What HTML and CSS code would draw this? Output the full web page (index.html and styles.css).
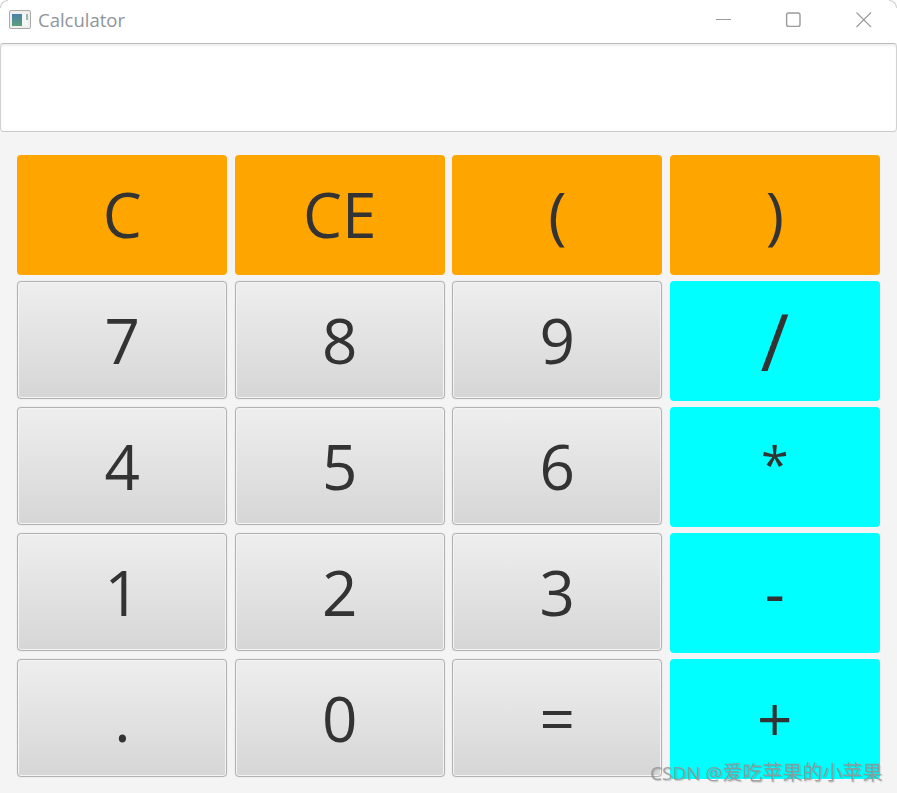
FILE: index.html
```html
<!DOCTYPE html>
<html lang="en">
<head>
<meta charset="utf-8">
<title>Calculator</title>
<link rel="stylesheet" href="styles.css">
</head>
<body>
<div class="window">
  <header class="titlebar">
    <svg class="app-icon" width="24" height="20" viewBox="0 0 24 20">
      <defs><linearGradient id="g" x1="0" y1="0" x2="0" y2="1"><stop offset="0" stop-color="#4a80a8"/><stop offset="1" stop-color="#5aa078"/></linearGradient></defs>
      <rect x="0.5" y="0.5" width="21" height="18" rx="1.5" fill="#efefef" stroke="#ababab"/>
      <rect x="3" y="4" width="10" height="12" fill="url(#g)"/>
      <rect x="13" y="4" width="6" height="12" fill="#f6f6f6"/>
      <rect x="17" y="4" width="2" height="6" fill="#9cbcaa"/>
    </svg>
    <span class="title">Calculator</span>
    <div class="controls">
      <svg class="ctl" width="46" height="16" viewBox="0 0 46 16"><path d="M17 7.5h15" stroke="#9a9a9a" fill="none"/></svg>
      <svg class="ctl" width="46" height="16" viewBox="0 0 46 16"><rect x="16.6" y="1" width="13.4" height="13.4" rx="2" stroke="#9a9a9a" stroke-width="1.4" fill="none"/></svg>
      <svg class="ctl" width="46" height="16" viewBox="0 0 46 16"><path d="M15.5 .5l14.5 14.5M30 .5l-14.5 14.5" stroke="#9a9a9a" stroke-width="1.1" fill="none"/></svg>
    </div>
  </header>
  <div class="display"></div>
  <main class="keys">
    <button class="key orange">C</button>
    <button class="key orange">CE</button>
    <button class="key orange">(</button>
    <button class="key orange">)</button>
    <button class="key">7</button>
    <button class="key">8</button>
    <button class="key">9</button>
    <button class="key cyan slash">/</button>
    <button class="key">4</button>
    <button class="key">5</button>
    <button class="key">6</button>
    <button class="key cyan star">*</button>
    <button class="key">1</button>
    <button class="key">2</button>
    <button class="key">3</button>
    <button class="key cyan">-</button>
    <button class="key">.</button>
    <button class="key">0</button>
    <button class="key">=</button>
    <button class="key cyan">+</button>
  </main>
  <div class="watermark">CSDN @<span class="wm-cjk">爱吃苹果的小苹果</span></div>
</div>
</body>
</html>
```

FILE: styles.css
```css
html, body {
  margin: 0;
  padding: 0;
  background: #fff;
}
.window {
  position: relative;
  width: 897px;
  height: 793px;
  overflow: hidden;
  background: #f4f4f4;
  font-family: "Open Sans", "Noto Sans", "Noto Sans CJK SC", sans-serif;
}
.titlebar {
  position: relative;
  height: 43px;
  background: #fff;
  display: flex;
  align-items: center;
  padding: 0 0 4px 9px;
  box-sizing: border-box;
}
.titlebar::before,
.titlebar::after {
  content: "";
  position: absolute;
  top: 0;
  width: 8px;
  height: 8px;
  box-sizing: border-box;
  border-top: 1px solid #cfcfcf;
}
.titlebar::before {
  left: 0;
  border-left: 1px solid #cfcfcf;
  border-top-left-radius: 8px;
}
.titlebar::after {
  right: 0;
  border-right: 1px solid #cfcfcf;
  border-top-right-radius: 8px;
}
.app-icon {
  margin-right: 5px;
  margin-top: 1px;
}
.title {
  font-size: 18.5px;
  color: #8f949a;
}
.controls {
  margin-left: auto;
  display: flex;
  gap: 25px;
  padding-right: 10px;
}
.display {
  height: 89px;
  box-sizing: border-box;
  background: #fff;
  border: 1px solid #d2d2d2;
  border-top: 1px solid #bcbcbc;
  border-bottom: 1px solid #c8c8c8;
  border-radius: 4px;
  box-shadow: inset 0 2px 2px #f0f0f0;
}
.keys {
  display: grid;
  grid-template-columns: repeat(4, 210px);
  grid-auto-rows: 120px;
  gap: 6px 7.5px;
  padding: 23.3px 0 0 17.3px;
}
.key {
  margin: 0;
  padding: 0;
  height: 118px;
  box-sizing: border-box;
  border: 1px solid #b2b2b2;
  border-radius: 4px;
  box-shadow: inset 0 0 0 1px #f4f4f4, 0 0 1px #b8b8b8;
  background: linear-gradient(#eeeeee, #d6d6d6);
  color: #333;
  font-family: inherit;
  font-size: 62px;
  line-height: 1;
}
.orange,
.cyan {
  height: 120px;
  padding-bottom: 2px;
  border: 0;
  box-shadow: none;
}
.orange {
  background: #ffa500;
}
.cyan {
  background: #00ffff;
}
.slash {
  font-size: 78px;
  padding-bottom: 0;
}
.star {
  font-size: 50px;
  padding-bottom: 6px;
}
.watermark {
  position: absolute;
  left: 650px;
  top: 760px;
  font-size: 19px;
  line-height: 26px;
  color: rgba(150,150,150,.85);
  text-shadow: 1px 1px 1px rgba(90,90,90,.3);
  white-space: nowrap;
}
.wm-cjk {
  font-size: 20px;
}
```
